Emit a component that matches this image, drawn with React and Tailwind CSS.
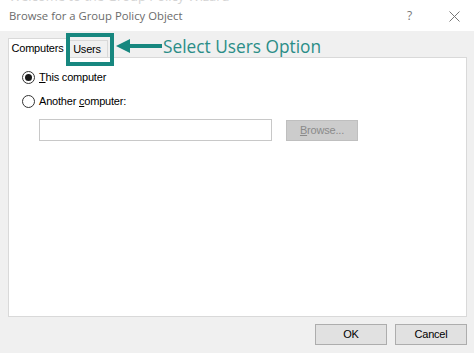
import React from "react";

function Radio({ checked }) {
  return (
    <span className="w-[13px] h-[13px] rounded-full border border-[#333] bg-white flex items-center justify-center shrink-0">
      {checked && <span className="w-[7px] h-[7px] rounded-full bg-[#1a1a1a]" />}
    </span>
  );
}

export default function App() {
  const ui = { fontFamily: '"Liberation Sans", Arial, sans-serif', letterSpacing: "-0.2px" };
  return (
    <div className="w-[474px] h-[353px] bg-[#f0f0f0] relative overflow-hidden flex flex-col" style={ui}>
      {/* ghost text of window behind */}
      <div className="absolute left-[9px] top-[-13px] text-[13px] text-[#d4d4d4] whitespace-nowrap" style={{ fontFamily: '"Open Sans", sans-serif', letterSpacing: 0 }}>
        Welcome to the Group Policy Wizard
      </div>
      {/* title bar */}
      <div className="h-[31px] bg-white flex items-center justify-between pl-[9px] pr-[14px] shrink-0">
        <span className="text-[11.3px] text-[#6b6b6b] pt-[1px]" style={{ fontFamily: '"Open Sans", sans-serif', letterSpacing: 0 }}>
          Browse for a Group Policy Object
        </span>
        <div className="flex items-center gap-[37px] text-[#777]">
          <span className="text-[12px]" style={{ fontFamily: '"Open Sans", sans-serif' }}>?</span>
          <svg width="11" height="11" viewBox="0 0 11 11" className="mt-[1px]">
            <path d="M0.5 0.5 L10.5 10.5 M10.5 0.5 L0.5 10.5" stroke="#777" strokeWidth="1" />
          </svg>
        </div>
      </div>
      {/* body */}
      <div className="flex-1 flex flex-col pl-[8px] pr-[7px] pt-[7px]">
        {/* tabs */}
        <div className="flex items-end h-[19px] relative z-10">
          <div className="w-[59px] h-[20px] mb-[-1px] bg-white border border-b-0 border-[#d9d9d9] text-[11px] text-black flex items-center justify-center">
            Computers
          </div>
          <div className="w-[41px] h-[17px] bg-[#f0f0f0] border border-l-0 border-b-0 border-[#d9d9d9] text-[11px] text-black flex items-center justify-center">
            Users
          </div>
        </div>
        {/* panel */}
        <div className="h-[260px] bg-white border border-[#d9d9d9] flex flex-col pl-[13px] pt-[12px] text-[11px] text-black">
          <div className="flex items-center gap-[4px] h-[15px]">
            <Radio checked />
            <span><span className="underline">T</span>his computer</span>
          </div>
          <div className="flex items-center gap-[4px] h-[15px] mt-[9px]">
            <Radio />
            <span>Another <span className="underline">c</span>omputer:</span>
          </div>
          <div className="flex items-center mt-[10px] pl-[17px]">
            <div className="w-[233px] h-[22px] border border-[#c8c8c8] bg-white" />
            <div className="ml-[14px] w-[72px] h-[21px] bg-[#cccccc] border border-[#bfbfbf] text-[#8a8a8a] flex items-center justify-center">
              <span><span className="underline">B</span>rowse...</span>
            </div>
          </div>
        </div>
        {/* footer */}
        <div className="flex-1 flex justify-end items-start pt-[7px] gap-[8px]">
          <div className="w-[72px] h-[21px] bg-[#e1e1e1] border border-[#adadad] text-[11px] text-black flex items-center justify-center">
            OK
          </div>
          <div className="w-[72px] h-[21px] bg-[#e1e1e1] border border-[#adadad] text-[11px] text-black flex items-center justify-center">
            Cancel
          </div>
        </div>
      </div>
      {/* annotation overlay */}
      <div className="absolute left-[66px] top-[33px] w-[48px] h-[33px] border-[4px] border-[#17877f] z-20" />
      <svg className="absolute left-[114px] top-[38px] z-20" width="50" height="16" viewBox="0 0 50 16">
        <polygon points="2,8 16,1 16,15" fill="#17877f" />
        <rect x="14" y="6" width="34" height="4" fill="#17877f" />
      </svg>
      <div className="absolute left-[163px] top-[34px] text-[17.3px] text-[#2a8d87] z-20 whitespace-nowrap" style={{ fontFamily: '"Open Sans", sans-serif', letterSpacing: 0 }}>
        Select Users Option
      </div>
    </div>
  );
}
